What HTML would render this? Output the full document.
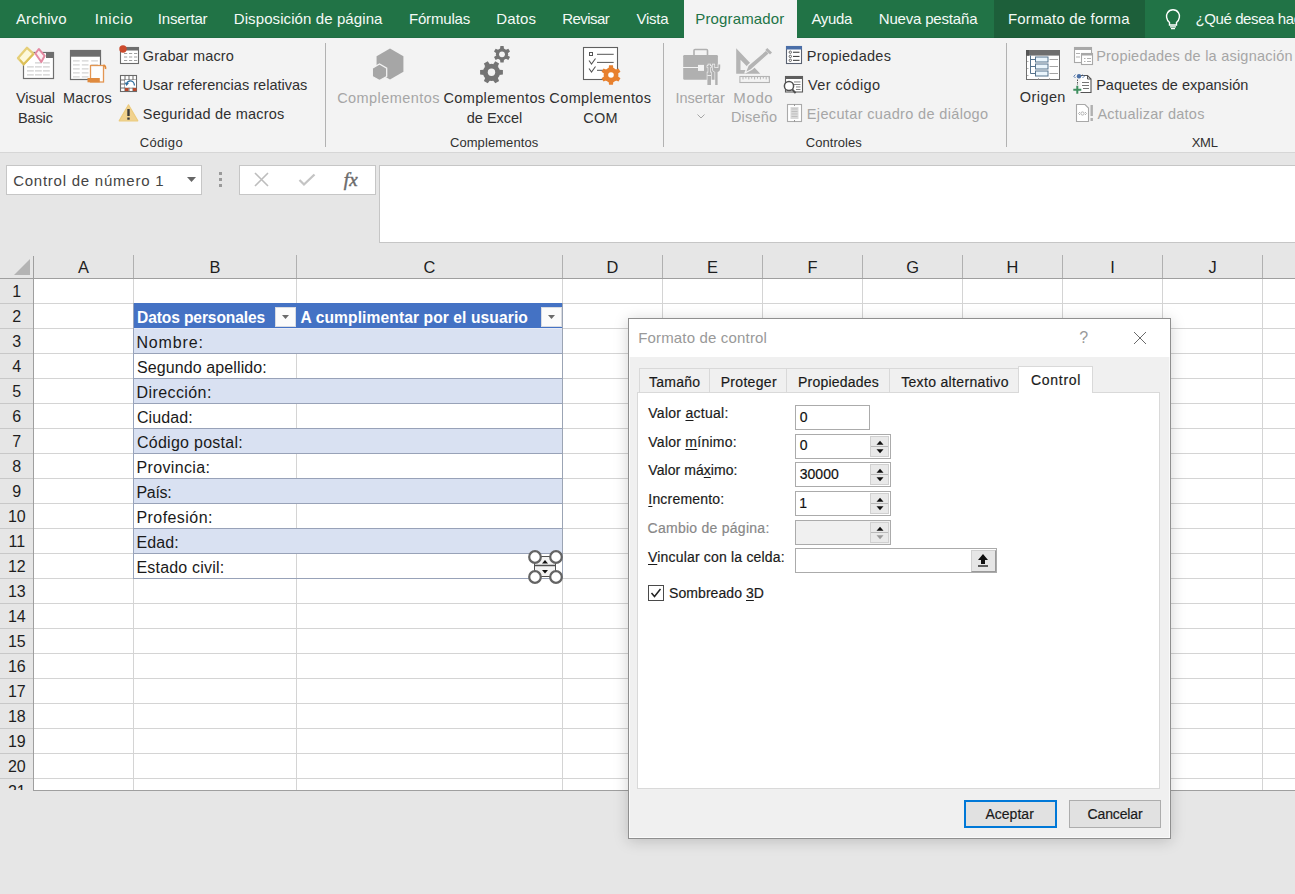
<!DOCTYPE html><html><head><meta charset="utf-8"><style>
*{box-sizing:border-box}
html,body{margin:0;padding:0}
body{width:1295px;height:894px;overflow:hidden;position:relative;background:#e6e6e6;font-family:"Liberation Sans",sans-serif}
div{position:absolute}
.t{white-space:pre;line-height:0;height:0}
.t span{display:inline-block;line-height:0}
svg{position:absolute;overflow:visible}
u{text-decoration-thickness:1px;text-underline-offset:2px}
</style></head><body>
<div style="left:0px;top:0px;width:1295px;height:38px;background:#217346"></div>
<div style="left:684px;top:0px;width:113px;height:38px;background:#f3f3f3"></div>
<div style="left:994px;top:0px;width:151px;height:38px;background:#1d5f3a"></div>
<div style="left:0px;top:37px;width:684px;height:1px;background:#1f6d43"></div>
<div style="left:797px;top:37px;width:197px;height:1px;background:#1f6d43"></div>
<div style="left:994px;top:37px;width:151px;height:1px;background:#1b5a37"></div>
<div style="left:1145px;top:37px;width:150px;height:1px;background:#1f6d43"></div>
<div class="t" style="left:16.00px;top:18.82px;font-size:15px;color:#f4faf6;letter-spacing:0.083px;"><span>Archivo</span></div>
<div class="t" style="left:94.75px;top:18.82px;font-size:15px;color:#f4faf6;letter-spacing:0.550px;"><span>Inicio</span></div>
<div class="t" style="left:157.75px;top:18.82px;font-size:15px;color:#f4faf6;letter-spacing:-0.143px;"><span>Insertar</span></div>
<div class="t" style="left:233.75px;top:18.82px;font-size:15px;color:#f4faf6;letter-spacing:0.095px;"><span>Disposición de página</span></div>
<div class="t" style="left:408.95px;top:18.82px;font-size:15px;color:#f4faf6;letter-spacing:-0.164px;"><span>Fórmulas</span></div>
<div class="t" style="left:496.35px;top:18.82px;font-size:15px;color:#f4faf6;letter-spacing:0.125px;"><span>Datos</span></div>
<div class="t" style="left:562.15px;top:18.82px;font-size:15px;color:#f4faf6;letter-spacing:-0.533px;"><span>Revisar</span></div>
<div class="t" style="left:636.60px;top:18.82px;font-size:15px;color:#f4faf6;letter-spacing:-0.300px;"><span>Vista</span></div>
<div class="t" style="left:695.35px;top:18.82px;font-size:15px;color:#217346;letter-spacing:0.140px;"><span>Programador</span></div>
<div class="t" style="left:811.40px;top:18.82px;font-size:15px;color:#f4faf6;letter-spacing:-0.338px;"><span>Ayuda</span></div>
<div class="t" style="left:878.75px;top:18.82px;font-size:15px;color:#f4faf6;letter-spacing:-0.179px;"><span>Nueva pestaña</span></div>
<div class="t" style="left:1007.95px;top:18.82px;font-size:15px;color:#f4faf6;letter-spacing:0.160px;"><span>Formato de forma</span></div>
<div class="t" style="left:1195.50px;top:18.82px;font-size:15px;color:#f4faf6;letter-spacing:-0.400px;"><span>¿Qué desea hacer?</span></div>
<svg style="left:1165px;top:9px" width="16" height="21" viewBox="0 0 16 21"><path d="M4.5 13.5 C1 10.5 1 6 2.5 3.8 C4 1.5 6 0.8 8 0.8 C10 0.8 12 1.5 13.5 3.8 C15 6 15 10.5 11.5 13.5 L11.5 16 L4.5 16 Z" fill="none" stroke="#fff" stroke-width="1.4"/><path d="M5 17.8 H11 M6 19.6 H10" stroke="#fff" stroke-width="1.3"/></svg>
<div style="left:0px;top:38px;width:1295px;height:114px;background:#f3f3f3"></div>
<div style="left:0px;top:152px;width:1295px;height:1px;background:#d6d6d6"></div>
<div style="left:325px;top:43px;width:1px;height:104px;background:#b2b2b2"></div>
<div style="left:663px;top:43px;width:1px;height:104px;background:#b2b2b2"></div>
<div style="left:1006px;top:43px;width:1px;height:104px;background:#b2b2b2"></div>
<div class="t" style="left:139.75px;top:142.51px;font-size:13px;color:#303030;letter-spacing:0.340px;"><span>Código</span></div>
<div class="t" style="left:449.95px;top:142.51px;font-size:13px;color:#303030;letter-spacing:0.077px;"><span>Complementos</span></div>
<div class="t" style="left:805.75px;top:142.51px;font-size:13px;color:#303030;letter-spacing:0.050px;"><span>Controles</span></div>
<div class="t" style="left:1191.65px;top:142.51px;font-size:13px;color:#303030;letter-spacing:-0.250px;"><span>XML</span></div>
<div class="t" style="left:16.00px;top:97.50px;font-size:14.5px;color:#303030;letter-spacing:-0.050px;"><span>Visual</span></div>
<div class="t" style="left:17.95px;top:117.50px;font-size:14.5px;color:#303030;letter-spacing:-0.113px;"><span>Basic</span></div>
<div class="t" style="left:62.95px;top:97.50px;font-size:14.5px;color:#303030;letter-spacing:0.250px;"><span>Macros</span></div>
<div class="t" style="left:142.75px;top:55.60px;font-size:14.5px;color:#303030;letter-spacing:0.155px;"><span>Grabar macro</span></div>
<div class="t" style="left:142.60px;top:84.50px;font-size:14.5px;color:#303030;letter-spacing:0.014px;"><span>Usar referencias relativas</span></div>
<div class="t" style="left:142.85px;top:113.50px;font-size:14.5px;color:#303030;letter-spacing:0.194px;"><span>Seguridad de macros</span></div>
<div class="t" style="left:337.15px;top:97.50px;font-size:14.5px;color:#a6a6a6;letter-spacing:0.432px;"><span>Complementos</span></div>
<div class="t" style="left:443.45px;top:97.50px;font-size:14.5px;color:#303030;letter-spacing:0.377px;"><span>Complementos</span></div>
<div class="t" style="left:466.80px;top:117.50px;font-size:14.5px;color:#303030;letter-spacing:-0.021px;"><span>de Excel</span></div>
<div class="t" style="left:549.35px;top:97.50px;font-size:14.5px;color:#303030;letter-spacing:0.377px;"><span>Complementos</span></div>
<div class="t" style="left:583.35px;top:117.50px;font-size:14.5px;color:#303030;letter-spacing:0.200px;"><span>COM</span></div>
<div class="t" style="left:675.45px;top:97.70px;font-size:14.5px;color:#a6a6a6;letter-spacing:0.021px;"><span>Insertar</span></div>
<div class="t" style="left:733.35px;top:97.53px;font-size:15px;color:#a6a6a6;letter-spacing:0.600px;"><span>Modo</span></div>
<div class="t" style="left:730.95px;top:117.20px;font-size:14.5px;color:#a6a6a6;letter-spacing:0.210px;"><span>Diseño</span></div>
<div class="t" style="left:806.85px;top:55.60px;font-size:14.5px;color:#303030;letter-spacing:0.265px;"><span>Propiedades</span></div>
<div class="t" style="left:808.10px;top:84.50px;font-size:14.5px;color:#303030;letter-spacing:0.378px;"><span>Ver código</span></div>
<div class="t" style="left:806.85px;top:113.50px;font-size:14.5px;color:#a6a6a6;letter-spacing:0.350px;"><span>Ejecutar cuadro de diálogo</span></div>
<div class="t" style="left:1019.85px;top:97.40px;font-size:14.5px;color:#303030;letter-spacing:0.410px;"><span>Origen</span></div>
<div class="t" style="left:1096.15px;top:55.60px;font-size:14.5px;color:#a6a6a6;letter-spacing:0.226px;"><span>Propiedades de la asignación</span></div>
<div class="t" style="left:1096.15px;top:84.50px;font-size:14.5px;color:#303030;letter-spacing:0.030px;"><span>Paquetes de expansión</span></div>
<div class="t" style="left:1097.40px;top:113.50px;font-size:14.5px;color:#a6a6a6;letter-spacing:0.257px;"><span>Actualizar datos</span></div>
<svg style="left:0;top:0" width="1295" height="160" viewBox="0 0 1295 160"><rect x="23.5" y="52.5" width="30" height="26" fill="#fff" stroke="#707070" stroke-width="1.2"/><rect x="46" y="52" width="8" height="6" fill="#6e6e6e"/><rect x="27" y="66.4" width="6.8" height="1" fill="#c4c4c4"/><rect x="35" y="66.4" width="6.8" height="1" fill="#c4c4c4"/><rect x="43" y="66.4" width="6.8" height="1" fill="#c4c4c4"/><rect x="27" y="70.4" width="6.8" height="1" fill="#c4c4c4"/><rect x="35" y="70.4" width="6.8" height="1" fill="#c4c4c4"/><rect x="43" y="70.4" width="6.8" height="1" fill="#c4c4c4"/><rect x="27" y="74.4" width="6.8" height="1" fill="#c4c4c4"/><rect x="35" y="74.4" width="6.8" height="1" fill="#c4c4c4"/><rect x="43" y="74.4" width="6.8" height="1" fill="#c4c4c4"/><rect x="35" y="62.4" width="6.8" height="1" fill="#c4c4c4"/><rect x="43" y="62.4" width="6.8" height="1" fill="#c4c4c4"/><path d="M27 47.8 L33.6 53.8 L23.7 64.3 L18 58.1 Z" fill="#fdf8dc" stroke="#e6cf78" stroke-width="2.3" stroke-linejoin="round"/><path d="M20 60 L23.7 64.3 L33.6 53.8" fill="none" stroke="#dcc05a" stroke-width="1.8"/><path d="M38.8 49 L44.7 55.8 L41.3 62 L35.4 53.5 Z" fill="#fdf0f3" stroke="#e48aa2" stroke-width="2" stroke-linejoin="round"/><rect x="70.5" y="50.5" width="30" height="29" fill="#fff" stroke="#6a6a6a" stroke-width="1.2"/><rect x="70" y="50" width="31" height="6.7" fill="#6d6d6d"/><rect x="73" y="60.4" width="6.7" height="1" fill="#c8c8c8"/><rect x="81.8" y="60.4" width="6.7" height="1" fill="#c8c8c8"/><rect x="91.2" y="60.4" width="6.7" height="1" fill="#c8c8c8"/><rect x="73" y="64.4" width="6.7" height="1" fill="#c8c8c8"/><rect x="81.8" y="64.4" width="6.7" height="1" fill="#c8c8c8"/><rect x="91.2" y="64.4" width="6.7" height="1" fill="#c8c8c8"/><rect x="73" y="68.4" width="6.7" height="1" fill="#c8c8c8"/><rect x="81.8" y="68.4" width="6.7" height="1" fill="#c8c8c8"/><rect x="91.2" y="68.4" width="6.7" height="1" fill="#c8c8c8"/><rect x="73" y="72.4" width="6.7" height="1" fill="#c8c8c8"/><rect x="81.8" y="72.4" width="6.7" height="1" fill="#c8c8c8"/><rect x="91.2" y="72.4" width="6.7" height="1" fill="#c8c8c8"/><rect x="73" y="76.4" width="6.7" height="1" fill="#c8c8c8"/><rect x="81.8" y="76.4" width="6.7" height="1" fill="#c8c8c8"/><rect x="91.2" y="76.4" width="6.7" height="1" fill="#c8c8c8"/><rect x="90.5" y="65.5" width="13" height="16.5" fill="#fdfdfd" stroke="#e39652" stroke-width="1.3"/><path d="M103.5 65 Q106 66 105.5 69" fill="none" stroke="#e08a3c" stroke-width="1.6"/><rect x="87.5" y="78" width="12.3" height="4.3" fill="#df8a3e"/><rect x="120.5" y="47.5" width="18" height="16" fill="#fff" stroke="#6a6a6a" stroke-width="1.1"/><rect x="120" y="47" width="19" height="3.5" fill="#6d6d6d"/><rect x="124" y="53" width="3.2" height="1" fill="#a0a0a0"/><rect x="129" y="53" width="3.2" height="1" fill="#a0a0a0"/><rect x="134" y="53" width="3.2" height="1" fill="#a0a0a0"/><rect x="124" y="56.5" width="3.2" height="1" fill="#a0a0a0"/><rect x="129" y="56.5" width="3.2" height="1" fill="#a0a0a0"/><rect x="134" y="56.5" width="3.2" height="1" fill="#a0a0a0"/><rect x="124" y="60" width="3.2" height="1" fill="#a0a0a0"/><rect x="129" y="60" width="3.2" height="1" fill="#a0a0a0"/><rect x="134" y="60" width="3.2" height="1" fill="#a0a0a0"/><circle cx="123" cy="49" r="3.7" fill="#cc4a2c"/><rect x="120.5" y="75.5" width="16" height="16" fill="#fff" stroke="#6a6a6a" stroke-width="1.1"/><rect x="124.5" y="76" width="1" height="15" fill="#6a6a6a"/><rect x="128.5" y="76" width="1" height="15" fill="#6a6a6a"/><rect x="132.5" y="76" width="1" height="15" fill="#6a6a6a"/><rect x="121" y="79.5" width="15" height="1" fill="#6a6a6a"/><rect x="121" y="83.5" width="15" height="1" fill="#6a6a6a"/><rect x="121" y="87.5" width="15" height="1" fill="#6a6a6a"/><rect x="125" y="88" width="3.5" height="3" fill="#b7472a"/><rect x="133" y="88" width="3.5" height="3" fill="#b7472a"/><rect x="125" y="80" width="11" height="7.5" fill="#fff"/><path d="M134.5 85.5 Q134 80.5 129.5 81 Q127 81.5 126.5 84" fill="none" stroke="#2f6f9f" stroke-width="1.3"/><path d="M124.5 82.5 L126.5 86 L129 83Z" fill="#2f6f9f"/><path d="M128.5 104.8 L137.8 120.8 L119.2 120.8 Z" fill="#f1d28e" stroke="#eccb7e" stroke-width="1.2" stroke-linejoin="round"/><rect x="127.3" y="109" width="2.4" height="7" fill="#3b3b3b"/><rect x="127.3" y="117.5" width="2.4" height="2.2" fill="#3b3b3b"/><path d="M390.00 79.50 L376.58 71.75 L376.58 56.25 L390.00 48.50 L403.42 56.25 L403.42 71.75Z" fill="#a6a6a6"/><path d="M379.50 80.60 L372.31 76.45 L372.31 68.15 L379.50 64.00 L386.69 68.15 L386.69 76.45Z" fill="#a6a6a6" stroke="#f3f3f3" stroke-width="1.3"/><circle cx="491.5" cy="72.3" r="8.6" fill="#747474"/><path d="M499.10 69.66 L502.90 70.10 L502.90 74.50 L499.10 74.94Z" fill="#747474"/><path d="M497.59 77.56 L499.11 81.07 L495.29 83.27 L493.01 80.20Z" fill="#747474"/><path d="M489.99 80.20 L487.71 83.27 L483.89 81.07 L485.41 77.56Z" fill="#747474"/><path d="M483.90 74.94 L480.10 74.50 L480.10 70.10 L483.90 69.66Z" fill="#747474"/><path d="M485.41 67.04 L483.89 63.53 L487.71 61.33 L489.99 64.40Z" fill="#747474"/><path d="M493.01 64.40 L495.29 61.33 L499.11 63.53 L497.59 67.04Z" fill="#747474"/><circle cx="491.5" cy="72.3" r="3.7" fill="#f3f3f3"/><circle cx="502" cy="54.3" r="6.1" fill="#747474"/><path d="M503.98 59.40 L503.65 62.60 L500.35 62.60 L500.02 59.40Z" fill="#747474"/><path d="M498.57 58.56 L495.64 59.88 L493.99 57.02 L496.59 55.14Z" fill="#747474"/><path d="M496.59 53.46 L493.99 51.58 L495.64 48.72 L498.57 50.04Z" fill="#747474"/><path d="M500.02 49.20 L500.35 46.00 L503.65 46.00 L503.98 49.20Z" fill="#747474"/><path d="M505.43 50.04 L508.36 48.72 L510.01 51.58 L507.41 53.46Z" fill="#747474"/><path d="M507.41 55.14 L510.01 57.02 L508.36 59.88 L505.43 58.56Z" fill="#747474"/><circle cx="502" cy="54.3" r="2.9" fill="#f3f3f3"/><rect x="583.5" y="47.5" width="34" height="32" fill="#fff" stroke="#606060" stroke-width="1.1"/><rect x="589.5" y="52.5" width="3" height="3" fill="none" stroke="#555" stroke-width="1"/><path d="M597 54.3H613.7 M597 62.4H613.7 M597 70.3H603.6" stroke="#555" stroke-width="1"/><path d="M589 60.5 L591.5 64 L595.5 58.5 M589 68.5 L591.5 72 L595.5 66.5" fill="none" stroke="#555" stroke-width="1.1"/><circle cx="611" cy="75" r="7.4" fill="#e8812f"/><path d="M613.34 81.40 L612.95 84.80 L609.05 84.80 L608.66 81.40Z" fill="#e8812f"/><path d="M606.63 80.23 L603.49 81.59 L601.54 78.21 L604.29 76.17Z" fill="#e8812f"/><path d="M604.29 73.83 L601.54 71.79 L603.49 68.41 L606.63 69.77Z" fill="#e8812f"/><path d="M608.66 68.60 L609.05 65.20 L612.95 65.20 L613.34 68.60Z" fill="#e8812f"/><path d="M615.37 69.77 L618.51 68.41 L620.46 71.79 L617.71 73.83Z" fill="#e8812f"/><path d="M617.71 76.17 L620.46 78.21 L618.51 81.59 L615.37 80.23Z" fill="#e8812f"/><circle cx="611" cy="75" r="2.8" fill="#fff"/><path d="M694 55 V50.5 Q694 49.5 695 49.5 H706.5 Q707.5 49.5 707.5 50.5 V55" fill="none" stroke="#b0b0b0" stroke-width="1.6"/><rect x="683.2" y="55.1" width="34.7" height="24.6" rx="1.2" fill="#b0b0b0"/><rect x="683" y="67" width="15" height="1" fill="#f3f3f3"/><rect x="698" y="64.9" width="6" height="6" fill="#f3f3f3"/><path d="M708.3 64.5 H710.1 V66 H711.1 V67.2 H710.1 V72.5 H711 V85 H707.4 V72.5 H708.3 V67.2 H707.3 V66 H708.3 Z" fill="#b0b0b0" stroke="#f3f3f3" stroke-width="1.3" paint-order="stroke"/><rect x="707.4" y="75" width="3.6" height="0.9" fill="#f3f3f3"/><path d="M712.6 64.5 V67.5 Q712.6 71.5 715.2 72 V85 H717.6 V72 Q720.2 71.5 720.2 67.5 V64.5 H718.4 V68 H714.4 V64.5 Z" fill="#b0b0b0" stroke="#f3f3f3" stroke-width="1.3" paint-order="stroke"/><path d="M736.2 48.2 V73.8 H760.3 Z M740.5 59.8 V70.1 H750.5 Z" fill="#b4b4b4" fill-rule="evenodd"/><path d="M745 73 L748 65.5 L766 50 L769.5 53.5 L751.5 69.5 Z" fill="#b4b4b4" stroke="#f3f3f3" stroke-width="1.4" stroke-linejoin="round"/><path d="M767.3 48 L772 52.5 L770 54.5 L765.3 50Z" fill="#b4b4b4"/><rect x="739.9" y="76.5" width="29.5" height="6" fill="none" stroke="#b4b4b4" stroke-width="1.1"/><rect x="742.5" y="77" width="1" height="2.4" fill="#b4b4b4"/><rect x="745.4" y="77" width="1" height="1.6" fill="#b4b4b4"/><rect x="748.3" y="77" width="1" height="2.4" fill="#b4b4b4"/><rect x="751.2" y="77" width="1" height="1.6" fill="#b4b4b4"/><rect x="754.1" y="77" width="1" height="2.4" fill="#b4b4b4"/><rect x="757.0" y="77" width="1" height="1.6" fill="#b4b4b4"/><rect x="759.9" y="77" width="1" height="2.4" fill="#b4b4b4"/><rect x="762.8" y="77" width="1" height="1.6" fill="#b4b4b4"/><rect x="765.7" y="77" width="1" height="2.4" fill="#b4b4b4"/><rect x="768.6" y="77" width="1" height="1.6" fill="#b4b4b4"/><rect x="786.5" y="46.5" width="15" height="17" fill="#fff" stroke="#5a6272" stroke-width="1.1"/><rect x="786" y="46" width="16" height="3.5" fill="#4a6ea8"/><circle cx="790.3" cy="52.2" r="1.2" fill="none" stroke="#555" stroke-width="0.9"/><rect x="793" y="51.7" width="6.5" height="1.1" fill="#444"/><circle cx="790.3" cy="56.4" r="1.2" fill="none" stroke="#555" stroke-width="0.9"/><rect x="793" y="55.9" width="6.5" height="1.1" fill="#444"/><circle cx="790.3" cy="60.3" r="1.2" fill="none" stroke="#555" stroke-width="0.9"/><rect x="793" y="59.8" width="6.5" height="1.1" fill="#444"/><rect x="785.5" y="76.5" width="17" height="15.5" fill="#fff" stroke="#5e5e5e" stroke-width="1.1"/><rect x="785" y="76" width="18" height="3" fill="#5e5e5e"/><rect x="794" y="81.5" width="6.5" height="0.9" fill="#777"/><rect x="794" y="84" width="6.5" height="0.9" fill="#777"/><rect x="796" y="86.5" width="4.5" height="0.9" fill="#777"/><rect x="796" y="89" width="4.5" height="0.9" fill="#777"/><circle cx="789" cy="86" r="4.6" fill="#fff" stroke="#505050" stroke-width="1.5"/><path d="M792.2 89.4 L795.6 93.2" stroke="#505050" stroke-width="2"/><rect x="787.5" y="104.5" width="14" height="17" fill="#fff" stroke="#aaaaaa" stroke-width="1.1"/><rect x="790.5" y="107" width="8" height="12" fill="#dadada"/><rect x="791.5" y="108.5" width="6" height="0.9" fill="#bdbdbd"/><rect x="791.5" y="111" width="6" height="0.9" fill="#bdbdbd"/><rect x="791.5" y="113.5" width="6" height="0.9" fill="#bdbdbd"/><rect x="791.5" y="116" width="6" height="0.9" fill="#bdbdbd"/><rect x="794" y="104" width="1" height="2" fill="#999"/><rect x="794" y="120" width="1" height="2" fill="#999"/><rect x="1026.5" y="50.5" width="33" height="29" fill="#fff" stroke="#6e6e6e" stroke-width="1"/><rect x="1026" y="50" width="34" height="5.6" fill="#6e6e6e"/><rect x="1026" y="50" width="3" height="5.6" fill="#555"/><path d="M1030.5 55.5 V73.5 M1030.5 59.5 H1035 M1030.5 66.5 H1035 M1030.5 73.5 H1035" stroke="#55728c" stroke-width="1" fill="none"/><rect x="1035.5" y="57" width="12.5" height="5" fill="#eaf5fc" stroke="#55728c" stroke-width="1"/><rect x="1049.5" y="59" width="8.5" height="0.9" fill="#9a9a9a"/><rect x="1035.5" y="64" width="12.5" height="5" fill="#eaf5fc" stroke="#55728c" stroke-width="1"/><rect x="1049.5" y="66" width="8.5" height="0.9" fill="#9a9a9a"/><rect x="1035.5" y="71" width="12.5" height="5" fill="#eaf5fc" stroke="#55728c" stroke-width="1"/><rect x="1049.5" y="73" width="8.5" height="0.9" fill="#9a9a9a"/><rect x="1027" y="61" width="1.5" height="0.9" fill="#a8a8a8"/><rect x="1027" y="68" width="1.5" height="0.9" fill="#a8a8a8"/><rect x="1027" y="75" width="1.5" height="0.9" fill="#a8a8a8"/><rect x="1038" y="78" width="0.9" height="1.5" fill="#a8a8a8"/><rect x="1049" y="78" width="0.9" height="1.5" fill="#a8a8a8"/><rect x="1074.5" y="47.5" width="17" height="15" fill="#fff" stroke="#a8a8a8" stroke-width="1.1"/><rect x="1074" y="47" width="18" height="3" fill="#a8a8a8"/><rect x="1081.5" y="53.5" width="11" height="11" fill="#fff" stroke="#a8a8a8" stroke-width="1.1"/><rect x="1081" y="53" width="12" height="2.5" fill="#a8a8a8"/><path d="M1076 53.5 H1080 M1076 57 H1080 M1084 58.5 H1085.5 M1087 58.5 H1091 M1084 61.5 H1085.5 M1087 61.5 H1091" stroke="#a8a8a8" stroke-width="0.9"/><path d="M1080.5 75.5 H1087.5 L1091 79 V92.5 H1080.5" fill="#fff" stroke="#555" stroke-width="1.1"/><path d="M1087.5 75.5 V79 H1091" fill="none" stroke="#555" stroke-width="1"/><path d="M1082 82.5 H1089 M1082 85.5 H1089 M1083 88.5 H1089" stroke="#666" stroke-width="0.9"/><circle cx="1079" cy="76.3" r="2.2" fill="#4a6fa5"/><path d="M1075.5 74.5 L1073.8 76.3 L1075.5 78 M1082.5 74.5 L1084.2 76.3 L1082.5 78" fill="none" stroke="#4a6fa5" stroke-width="0.9"/><path d="M1077.5 79.5 V85" stroke="#555" stroke-width="1" stroke-dasharray="1.5 1"/><path d="M1077.3 85.7 V93.7 M1073.3 89.7 H1081.3" stroke="#3f8f5f" stroke-width="2"/><path d="M1076.5 104.5 H1085 L1088.5 108 V121.5 H1076.5 Z" fill="#fff" stroke="#a8a8a8" stroke-width="1.1"/><path d="M1080 112 L1078.5 113.5 L1080 115 M1085 112 L1086.5 113.5 L1085 115" fill="none" stroke="#aaa" stroke-width="0.9"/><circle cx="1082.5" cy="113.5" r="1.6" fill="none" stroke="#aaa" stroke-width="0.9"/><rect x="1090.5" y="105" width="2.4" height="11" fill="#b0b0b0"/><rect x="1090.5" y="118" width="2.4" height="3" fill="#b0b0b0"/></svg>
<svg style="left:697px;top:114px" width="8" height="5"><path d="M0.5 0.5L4 4L7.5 0.5" fill="none" stroke="#a6a6a6" stroke-width="1"/></svg>
<div style="left:6px;top:165px;width:196px;height:30px;background:#fff;border:1px solid #c6c6c6"></div>
<div class="t" style="left:13.15px;top:180.82px;font-size:15px;color:#444;letter-spacing:0.758px;"><span>Control de número 1</span></div>
<svg style="left:187px;top:177px" width="9" height="5"><path d="M0 0H9L4.5 5Z" fill="#666"/></svg>
<div style="left:219px;top:172px;width:3px;height:3px;background:#9a9a9a"></div>
<div style="left:219px;top:178px;width:3px;height:3px;background:#9a9a9a"></div>
<div style="left:219px;top:184px;width:3px;height:3px;background:#9a9a9a"></div>
<div style="left:239px;top:165px;width:137px;height:30px;background:#fff;border:1px solid #c6c6c6"></div>
<svg style="left:254px;top:172px" width="15" height="15"><path d="M1 1L14 14M14 1L1 14" stroke="#bdbdbd" stroke-width="1.6"/></svg>
<svg style="left:298px;top:172px" width="18" height="15"><path d="M1.5 8L6 12.5L16.5 2.5" fill="none" stroke="#c4c4c4" stroke-width="2.3"/></svg>
<div class="t" style="left:343.75px;top:180.13px;font-size:19px;color:#6a6a6a;font-family:'Liberation Serif';font-style:italic;letter-spacing:0.200px;-webkit-text-stroke:0.45px #6a6a6a;"><span>fx</span></div>
<div style="left:379px;top:165px;width:916px;height:78px;background:#fff;border:1px solid #c6c6c6;border-right:none"></div>
<div style="left:0px;top:256px;width:1295px;height:22px;background:#e6e6e6"></div>
<div style="left:0px;top:278px;width:33px;height:512px;background:#e6e6e6"></div>
<div style="left:34px;top:279px;width:1261px;height:511px;background:#fff"></div>
<div style="left:34px;top:303px;width:1261px;height:1px;background:#d4d4d4"></div>
<div style="left:0px;top:303px;width:33px;height:1px;background:#c8c8c8"></div>
<div style="left:34px;top:328px;width:1261px;height:1px;background:#d4d4d4"></div>
<div style="left:0px;top:328px;width:33px;height:1px;background:#c8c8c8"></div>
<div style="left:34px;top:353px;width:1261px;height:1px;background:#d4d4d4"></div>
<div style="left:0px;top:353px;width:33px;height:1px;background:#c8c8c8"></div>
<div style="left:34px;top:378px;width:1261px;height:1px;background:#d4d4d4"></div>
<div style="left:0px;top:378px;width:33px;height:1px;background:#c8c8c8"></div>
<div style="left:34px;top:403px;width:1261px;height:1px;background:#d4d4d4"></div>
<div style="left:0px;top:403px;width:33px;height:1px;background:#c8c8c8"></div>
<div style="left:34px;top:428px;width:1261px;height:1px;background:#d4d4d4"></div>
<div style="left:0px;top:428px;width:33px;height:1px;background:#c8c8c8"></div>
<div style="left:34px;top:453px;width:1261px;height:1px;background:#d4d4d4"></div>
<div style="left:0px;top:453px;width:33px;height:1px;background:#c8c8c8"></div>
<div style="left:34px;top:478px;width:1261px;height:1px;background:#d4d4d4"></div>
<div style="left:0px;top:478px;width:33px;height:1px;background:#c8c8c8"></div>
<div style="left:34px;top:503px;width:1261px;height:1px;background:#d4d4d4"></div>
<div style="left:0px;top:503px;width:33px;height:1px;background:#c8c8c8"></div>
<div style="left:34px;top:528px;width:1261px;height:1px;background:#d4d4d4"></div>
<div style="left:0px;top:528px;width:33px;height:1px;background:#c8c8c8"></div>
<div style="left:34px;top:553px;width:1261px;height:1px;background:#d4d4d4"></div>
<div style="left:0px;top:553px;width:33px;height:1px;background:#c8c8c8"></div>
<div style="left:34px;top:578px;width:1261px;height:1px;background:#d4d4d4"></div>
<div style="left:0px;top:578px;width:33px;height:1px;background:#c8c8c8"></div>
<div style="left:34px;top:603px;width:1261px;height:1px;background:#d4d4d4"></div>
<div style="left:0px;top:603px;width:33px;height:1px;background:#c8c8c8"></div>
<div style="left:34px;top:628px;width:1261px;height:1px;background:#d4d4d4"></div>
<div style="left:0px;top:628px;width:33px;height:1px;background:#c8c8c8"></div>
<div style="left:34px;top:653px;width:1261px;height:1px;background:#d4d4d4"></div>
<div style="left:0px;top:653px;width:33px;height:1px;background:#c8c8c8"></div>
<div style="left:34px;top:678px;width:1261px;height:1px;background:#d4d4d4"></div>
<div style="left:0px;top:678px;width:33px;height:1px;background:#c8c8c8"></div>
<div style="left:34px;top:703px;width:1261px;height:1px;background:#d4d4d4"></div>
<div style="left:0px;top:703px;width:33px;height:1px;background:#c8c8c8"></div>
<div style="left:34px;top:728px;width:1261px;height:1px;background:#d4d4d4"></div>
<div style="left:0px;top:728px;width:33px;height:1px;background:#c8c8c8"></div>
<div style="left:34px;top:753px;width:1261px;height:1px;background:#d4d4d4"></div>
<div style="left:0px;top:753px;width:33px;height:1px;background:#c8c8c8"></div>
<div style="left:34px;top:778px;width:1261px;height:1px;background:#d4d4d4"></div>
<div style="left:0px;top:778px;width:33px;height:1px;background:#c8c8c8"></div>
<div style="left:133px;top:279px;width:1px;height:511px;background:#d4d4d4"></div>
<div style="left:133px;top:255px;width:1px;height:23px;background:#b0b0b0"></div>
<div style="left:296px;top:279px;width:1px;height:511px;background:#d4d4d4"></div>
<div style="left:296px;top:255px;width:1px;height:23px;background:#b0b0b0"></div>
<div style="left:562px;top:279px;width:1px;height:511px;background:#d4d4d4"></div>
<div style="left:562px;top:255px;width:1px;height:23px;background:#b0b0b0"></div>
<div style="left:662px;top:279px;width:1px;height:511px;background:#d4d4d4"></div>
<div style="left:662px;top:255px;width:1px;height:23px;background:#b0b0b0"></div>
<div style="left:762px;top:279px;width:1px;height:511px;background:#d4d4d4"></div>
<div style="left:762px;top:255px;width:1px;height:23px;background:#b0b0b0"></div>
<div style="left:862px;top:279px;width:1px;height:511px;background:#d4d4d4"></div>
<div style="left:862px;top:255px;width:1px;height:23px;background:#b0b0b0"></div>
<div style="left:962px;top:279px;width:1px;height:511px;background:#d4d4d4"></div>
<div style="left:962px;top:255px;width:1px;height:23px;background:#b0b0b0"></div>
<div style="left:1062px;top:279px;width:1px;height:511px;background:#d4d4d4"></div>
<div style="left:1062px;top:255px;width:1px;height:23px;background:#b0b0b0"></div>
<div style="left:1162px;top:279px;width:1px;height:511px;background:#d4d4d4"></div>
<div style="left:1162px;top:255px;width:1px;height:23px;background:#b0b0b0"></div>
<div style="left:1262px;top:279px;width:1px;height:511px;background:#d4d4d4"></div>
<div style="left:1262px;top:255px;width:1px;height:23px;background:#b0b0b0"></div>
<div style="left:0px;top:278px;width:1295px;height:1px;background:#9f9f9f"></div>
<div style="left:33px;top:256px;width:1px;height:534px;background:#9f9f9f"></div>
<div style="left:33px;top:790px;width:1262px;height:1px;background:#9f9f9f"></div>
<svg style="left:14px;top:259px" width="17" height="17"><path d="M16 0V16H0Z" fill="#b4b4b4"/></svg>
<div class="t" style="left:83.5px;top:267.14px;font-size:16.4px;color:#1e1e1e"><span style="transform:translateX(-50%)">A</span></div>
<div class="t" style="left:215.0px;top:267.14px;font-size:16.4px;color:#1e1e1e"><span style="transform:translateX(-50%)">B</span></div>
<div class="t" style="left:429.5px;top:267.14px;font-size:16.4px;color:#1e1e1e"><span style="transform:translateX(-50%)">C</span></div>
<div class="t" style="left:612.5px;top:267.14px;font-size:16.4px;color:#1e1e1e"><span style="transform:translateX(-50%)">D</span></div>
<div class="t" style="left:712.5px;top:267.14px;font-size:16.4px;color:#1e1e1e"><span style="transform:translateX(-50%)">E</span></div>
<div class="t" style="left:812.5px;top:267.14px;font-size:16.4px;color:#1e1e1e"><span style="transform:translateX(-50%)">F</span></div>
<div class="t" style="left:912.5px;top:267.14px;font-size:16.4px;color:#1e1e1e"><span style="transform:translateX(-50%)">G</span></div>
<div class="t" style="left:1012.5px;top:267.14px;font-size:16.4px;color:#1e1e1e"><span style="transform:translateX(-50%)">H</span></div>
<div class="t" style="left:1112.5px;top:267.14px;font-size:16.4px;color:#1e1e1e"><span style="transform:translateX(-50%)">I</span></div>
<div class="t" style="left:1212.5px;top:267.14px;font-size:16.4px;color:#1e1e1e"><span style="transform:translateX(-50%)">J</span></div>
<div style="left:0;top:279px;width:33px;height:511px;overflow:hidden">
<div class="t" style="left:16.8px;top:13.08px;font-size:16px;color:#1e1e1e"><span style="transform:translateX(-50%)">1</span></div>
<div class="t" style="left:16.8px;top:38.08px;font-size:16px;color:#1e1e1e"><span style="transform:translateX(-50%)">2</span></div>
<div class="t" style="left:16.8px;top:63.08px;font-size:16px;color:#1e1e1e"><span style="transform:translateX(-50%)">3</span></div>
<div class="t" style="left:16.8px;top:88.08px;font-size:16px;color:#1e1e1e"><span style="transform:translateX(-50%)">4</span></div>
<div class="t" style="left:16.8px;top:113.08px;font-size:16px;color:#1e1e1e"><span style="transform:translateX(-50%)">5</span></div>
<div class="t" style="left:16.8px;top:138.08px;font-size:16px;color:#1e1e1e"><span style="transform:translateX(-50%)">6</span></div>
<div class="t" style="left:16.8px;top:163.08px;font-size:16px;color:#1e1e1e"><span style="transform:translateX(-50%)">7</span></div>
<div class="t" style="left:16.8px;top:188.08px;font-size:16px;color:#1e1e1e"><span style="transform:translateX(-50%)">8</span></div>
<div class="t" style="left:16.8px;top:213.08px;font-size:16px;color:#1e1e1e"><span style="transform:translateX(-50%)">9</span></div>
<div class="t" style="left:16.8px;top:238.08px;font-size:16px;color:#1e1e1e"><span style="transform:translateX(-50%)">10</span></div>
<div class="t" style="left:16.8px;top:263.08px;font-size:16px;color:#1e1e1e"><span style="transform:translateX(-50%)">11</span></div>
<div class="t" style="left:16.8px;top:288.08px;font-size:16px;color:#1e1e1e"><span style="transform:translateX(-50%)">12</span></div>
<div class="t" style="left:16.8px;top:313.08px;font-size:16px;color:#1e1e1e"><span style="transform:translateX(-50%)">13</span></div>
<div class="t" style="left:16.8px;top:338.08px;font-size:16px;color:#1e1e1e"><span style="transform:translateX(-50%)">14</span></div>
<div class="t" style="left:16.8px;top:363.08px;font-size:16px;color:#1e1e1e"><span style="transform:translateX(-50%)">15</span></div>
<div class="t" style="left:16.8px;top:388.08px;font-size:16px;color:#1e1e1e"><span style="transform:translateX(-50%)">16</span></div>
<div class="t" style="left:16.8px;top:413.08px;font-size:16px;color:#1e1e1e"><span style="transform:translateX(-50%)">17</span></div>
<div class="t" style="left:16.8px;top:438.08px;font-size:16px;color:#1e1e1e"><span style="transform:translateX(-50%)">18</span></div>
<div class="t" style="left:16.8px;top:463.08px;font-size:16px;color:#1e1e1e"><span style="transform:translateX(-50%)">19</span></div>
<div class="t" style="left:16.8px;top:488.08px;font-size:16px;color:#1e1e1e"><span style="transform:translateX(-50%)">20</span></div>
<div class="t" style="left:16.8px;top:513.08px;font-size:16px;color:#1e1e1e"><span style="transform:translateX(-50%)">21</span></div>
</div>
<div style="left:133px;top:303px;width:430px;height:25px;background:#4472c4"></div>
<div style="left:134px;top:328px;width:428px;height:1px;background:#e6eaf5"></div>
<div class="t" style="left:137.00px;top:317.62px;font-size:15.6px;color:#fff;font-weight:700;letter-spacing:-0.120px;"><span>Datos personales</span></div>
<div class="t" style="left:300.50px;top:317.62px;font-size:15.6px;color:#fff;font-weight:700;letter-spacing:0.095px;"><span>A cumplimentar por el usuario</span></div>
<div style="left:275px;top:307px;width:21px;height:20px;background:#fbfbfb;border:1px solid #d8dbe2"></div>
<svg style="left:282px;top:315px" width="7" height="4"><path d="M0 0H7L3.5 4Z" fill="#6a6a6a"/></svg>
<div style="left:541px;top:307px;width:21px;height:20px;background:#fbfbfb;border:1px solid #d8dbe2"></div>
<svg style="left:548px;top:315px" width="7" height="4"><path d="M0 0H7L3.5 4Z" fill="#6a6a6a"/></svg>
<div style="left:134px;top:329px;width:428px;height:24px;background:#d9e1f2"></div>
<div style="left:133px;top:353px;width:430px;height:1px;background:#98a2b8"></div>
<div class="t" style="left:136.45px;top:343.48px;font-size:16px;color:#1a1a1a;letter-spacing:0.842px;"><span>Nombre:</span></div>
<div style="left:133px;top:378px;width:430px;height:1px;background:#98a2b8"></div>
<div class="t" style="left:136.95px;top:368.48px;font-size:16px;color:#1a1a1a;letter-spacing:0.106px;"><span>Segundo apellido:</span></div>
<div style="left:134px;top:379px;width:428px;height:24px;background:#d9e1f2"></div>
<div style="left:133px;top:403px;width:430px;height:1px;background:#98a2b8"></div>
<div class="t" style="left:136.45px;top:393.48px;font-size:16px;color:#1a1a1a;letter-spacing:0.422px;"><span>Dirección:</span></div>
<div style="left:133px;top:428px;width:430px;height:1px;background:#98a2b8"></div>
<div class="t" style="left:136.95px;top:418.48px;font-size:16px;color:#1a1a1a;letter-spacing:0.083px;"><span>Ciudad:</span></div>
<div style="left:134px;top:429px;width:428px;height:24px;background:#d9e1f2"></div>
<div style="left:133px;top:453px;width:430px;height:1px;background:#98a2b8"></div>
<div class="t" style="left:136.95px;top:443.48px;font-size:16px;color:#1a1a1a;letter-spacing:0.269px;"><span>Código postal:</span></div>
<div style="left:133px;top:478px;width:430px;height:1px;background:#98a2b8"></div>
<div class="t" style="left:136.45px;top:468.48px;font-size:16px;color:#1a1a1a;letter-spacing:0.367px;"><span>Provincia:</span></div>
<div style="left:134px;top:479px;width:428px;height:24px;background:#d9e1f2"></div>
<div style="left:133px;top:503px;width:430px;height:1px;background:#98a2b8"></div>
<div class="t" style="left:136.45px;top:493.48px;font-size:16px;color:#1a1a1a;letter-spacing:-0.312px;"><span>País:</span></div>
<div style="left:133px;top:528px;width:430px;height:1px;background:#98a2b8"></div>
<div class="t" style="left:136.45px;top:518.48px;font-size:16px;color:#1a1a1a;letter-spacing:0.439px;"><span>Profesión:</span></div>
<div style="left:134px;top:529px;width:428px;height:24px;background:#d9e1f2"></div>
<div style="left:133px;top:553px;width:430px;height:1px;background:#98a2b8"></div>
<div class="t" style="left:136.45px;top:543.48px;font-size:16px;color:#1a1a1a;letter-spacing:0.125px;"><span>Edad:</span></div>
<div style="left:133px;top:578px;width:430px;height:1px;background:#98a2b8"></div>
<div class="t" style="left:136.45px;top:568.48px;font-size:16px;color:#1a1a1a;letter-spacing:0.204px;"><span>Estado civil:</span></div>
<div style="left:133px;top:303px;width:1px;height:276px;background:#98a4bc"></div>
<div style="left:562px;top:303px;width:1px;height:276px;background:#9ba4b4"></div>
<svg style="left:527px;top:549px" width="37" height="36" viewBox="0 0 37 36">
<rect x="7.5" y="7.5" width="21" height="20" fill="#f4f4f4" stroke="#505050" stroke-width="1"/>
<path d="M8 16.5H28" stroke="#505050" stroke-width="1.5"/>
<path d="M15 14.5L18 11L21 14.5Z" fill="#111"/><path d="M15 21L18 24.5L21 21Z" fill="#111"/>
<circle cx="8" cy="8" r="5.8" fill="#fff" stroke="#646464" stroke-width="2.2"/>
<circle cx="29" cy="8" r="5.8" fill="#fff" stroke="#646464" stroke-width="2.2"/>
<circle cx="8" cy="28" r="5.8" fill="#fff" stroke="#646464" stroke-width="2.2"/>
<circle cx="29" cy="28" r="5.8" fill="#fff" stroke="#646464" stroke-width="2.2"/>
</svg>
<div style="left:628px;top:318px;width:543px;height:521px;background:#f0f0f0;border:1px solid #8f8f8f;box-shadow:0 2px 14px rgba(0,0,0,0.18), inset 0 0 0 1px #fafafa"></div>
<div style="left:629px;top:319px;width:541px;height:38px;background:#fff"></div>
<div class="t" style="left:638.15px;top:337.82px;font-size:15px;color:#999;letter-spacing:0.168px;"><span>Formato de control</span></div>
<div class="t" style="left:1079.25px;top:337.98px;font-size:16px;color:#999;"><span>?</span></div>
<svg style="left:1134px;top:332px" width="12" height="12"><path d="M0 0L12 12M12 0L0 12" stroke="#6a6a6a" stroke-width="1"/></svg>
<div style="left:639px;top:368px;width:71px;height:25px;background:#f0f0f0;border:1px solid #d9d9d9"></div>
<div style="left:709px;top:368px;width:78px;height:25px;background:#f0f0f0;border:1px solid #d9d9d9"></div>
<div style="left:786px;top:368px;width:104px;height:25px;background:#f0f0f0;border:1px solid #d9d9d9"></div>
<div style="left:889px;top:368px;width:130px;height:25px;background:#f0f0f0;border:1px solid #d9d9d9"></div>
<div style="left:637px;top:392px;width:523px;height:397px;background:#fff;border:1px solid #d9d9d9"></div>
<div style="left:1018px;top:366px;width:75px;height:27px;background:#fff;border:1px solid #d9d9d9;border-bottom:none"></div>
<div class="t" style="left:649.05px;top:382.17px;font-size:14px;color:#1a1a1a;letter-spacing:0.260px;-webkit-text-stroke:0.18px #1a1a1a;"><span>Tamaño</span></div>
<div class="t" style="left:720.65px;top:382.17px;font-size:14px;color:#1a1a1a;letter-spacing:0.321px;-webkit-text-stroke:0.18px #1a1a1a;"><span>Proteger</span></div>
<div class="t" style="left:797.95px;top:382.17px;font-size:14px;color:#1a1a1a;letter-spacing:0.225px;-webkit-text-stroke:0.18px #1a1a1a;"><span>Propiedades</span></div>
<div class="t" style="left:901.15px;top:382.17px;font-size:14px;color:#1a1a1a;letter-spacing:0.334px;-webkit-text-stroke:0.18px #1a1a1a;"><span>Texto alternativo</span></div>
<div class="t" style="left:1030.95px;top:380.17px;font-size:14px;color:#1a1a1a;letter-spacing:0.733px;-webkit-text-stroke:0.18px #1a1a1a;"><span>Control</span></div>
<div class="t" style="left:648.30px;top:412.87px;font-size:14px;color:#1a1a1a;letter-spacing:0.267px;-webkit-text-stroke:0.18px #1a1a1a;"><span>Valor <u>a</u>ctual:</span></div>
<div style="left:795px;top:405px;width:75px;height:25px;background:#fff;border:1px solid #ababab"></div>
<div class="t" style="left:799.80px;top:417.17px;font-size:14px;color:#111;-webkit-text-stroke:0.18px #111;"><span>0</span></div>
<div class="t" style="left:648.30px;top:441.57px;font-size:14px;color:#1a1a1a;letter-spacing:0.250px;-webkit-text-stroke:0.18px #1a1a1a;"><span>Valor <u>m</u>ínimo:</span></div>
<div style="left:795px;top:434px;width:96px;height:25px;background:#fff;border:1px solid #ababab"></div>
<div style="left:870px;top:436px;width:19px;height:21px;background:#e9e9e9;border:1px solid #d0d0d0"></div>
<div style="left:871px;top:446px;width:17px;height:1px;background:#b9b9b9"></div>
<svg style="left:876px;top:440px" width="8" height="14"><path d="M0.5 4.8L4 0.8L7.5 4.8Z" fill="#111"/><path d="M0.5 9.2L4 13.2L7.5 9.2Z" fill="#111"/></svg>
<div class="t" style="left:799.80px;top:445.17px;font-size:14px;color:#111;-webkit-text-stroke:0.18px #111;"><span>0</span></div>
<div class="t" style="left:648.30px;top:470.27px;font-size:14px;color:#1a1a1a;letter-spacing:0.062px;-webkit-text-stroke:0.18px #1a1a1a;"><span>Valor má<u>x</u>imo:</span></div>
<div style="left:795px;top:462px;width:96px;height:25px;background:#fff;border:1px solid #ababab"></div>
<div style="left:870px;top:464px;width:19px;height:21px;background:#e9e9e9;border:1px solid #d0d0d0"></div>
<div style="left:871px;top:474px;width:17px;height:1px;background:#b9b9b9"></div>
<svg style="left:876px;top:468px" width="8" height="14"><path d="M0.5 4.8L4 0.8L7.5 4.8Z" fill="#111"/><path d="M0.5 9.2L4 13.2L7.5 9.2Z" fill="#111"/></svg>
<div class="t" style="left:799.80px;top:474.17px;font-size:14px;color:#111;-webkit-text-stroke:0.18px #111;"><span>30000</span></div>
<div class="t" style="left:648.30px;top:498.97px;font-size:14px;color:#1a1a1a;letter-spacing:0.195px;-webkit-text-stroke:0.18px #1a1a1a;"><span><u>I</u>ncremento:</span></div>
<div style="left:795px;top:491px;width:96px;height:25px;background:#fff;border:1px solid #ababab"></div>
<div style="left:870px;top:493px;width:19px;height:21px;background:#e9e9e9;border:1px solid #d0d0d0"></div>
<div style="left:871px;top:503px;width:17px;height:1px;background:#b9b9b9"></div>
<svg style="left:876px;top:497px" width="8" height="14"><path d="M0.5 4.8L4 0.8L7.5 4.8Z" fill="#111"/><path d="M0.5 9.2L4 13.2L7.5 9.2Z" fill="#111"/></svg>
<div class="t" style="left:799.30px;top:503.17px;font-size:14px;color:#111;-webkit-text-stroke:0.18px #111;"><span>1</span></div>
<div class="t" style="left:647.55px;top:527.67px;font-size:14px;color:#888;letter-spacing:0.263px;-webkit-text-stroke:0.18px #888;"><span>Cambio de página:</span></div>
<div style="left:795px;top:520px;width:96px;height:25px;background:#f0f0f0;border:1px solid #ababab"></div>
<div style="left:870px;top:522px;width:19px;height:21px;background:#e9e9e9;border:1px solid #d0d0d0"></div>
<div style="left:871px;top:532px;width:17px;height:1px;background:#b9b9b9"></div>
<svg style="left:876px;top:526px" width="8" height="14"><path d="M0.5 4.8L4 0.8L7.5 4.8Z" fill="#111"/><path d="M0.5 9.2L4 13.2L7.5 9.2Z" fill="#999"/></svg>
<div class="t" style="left:648.00px;top:557.17px;font-size:14px;color:#1a1a1a;letter-spacing:0.181px;-webkit-text-stroke:0.18px #1a1a1a;"><span><u>V</u>incular con la celda:</span></div>
<div style="left:795px;top:548px;width:202px;height:25px;background:#fff;border:1px solid #ababab"></div>
<div style="left:971px;top:550px;width:25px;height:22px;background:#e6e6e6;border:1px solid #d0d0d0;border-right-color:#9a9a9a;border-bottom-color:#9a9a9a"></div>
<svg style="left:976px;top:553px" width="14" height="14"><path d="M7 1L12 7H9V11H5V7H2Z" fill="#111"/><path d="M2 13H12" stroke="#111" stroke-width="1.3"/></svg>
<div style="left:648px;top:585px;width:16px;height:16px;background:#fff;border:1px solid #4a4a4a"></div>
<svg style="left:650px;top:587px" width="12" height="12"><path d="M1.5 6L4.5 9.5L10.5 2" fill="none" stroke="#222" stroke-width="1.5"/></svg>
<div class="t" style="left:669.05px;top:593.17px;font-size:14px;color:#1a1a1a;letter-spacing:0.068px;-webkit-text-stroke:0.18px #1a1a1a;"><span>Sombreado <u>3</u>D</span></div>
<div style="left:964px;top:800px;width:93px;height:28px;background:#e1e1e1;border:2px solid #0078d7"></div>
<div style="left:1069px;top:800px;width:92px;height:28px;background:#e1e1e1;border:1px solid #adadad"></div>
<div class="t" style="left:985.40px;top:814.17px;font-size:14px;color:#1a1a1a;letter-spacing:0.033px;-webkit-text-stroke:0.18px #1a1a1a;"><span>Aceptar</span></div>
<div class="t" style="left:1087.55px;top:814.17px;font-size:14px;color:#1a1a1a;letter-spacing:-0.129px;-webkit-text-stroke:0.18px #1a1a1a;"><span>Cancelar</span></div>
</body></html>
